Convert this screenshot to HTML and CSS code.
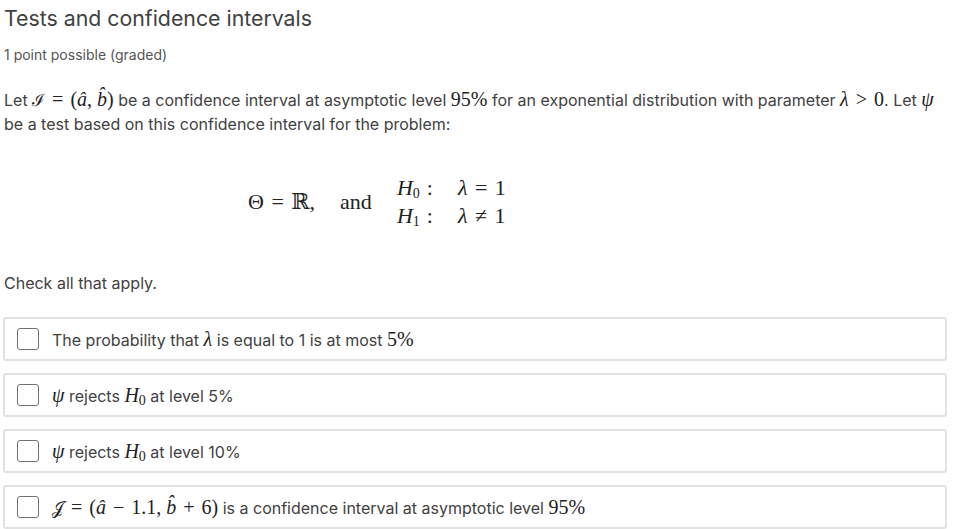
FILE: index.html
```html
<!DOCTYPE html>
<html>
<head>
<meta charset="utf-8">
<link rel="stylesheet" href="styles.css">
</head>
<body>
<div class="problem">
  <h2 class="title">Tests and confidence intervals</h2>
  <div class="meta">1 point possible (graded)</div>
  <p class="text intro"><span class="line">Let <span class="m"><span class="mi cal">ℐ</span> <span class="mo">=</span> <span class="mr">(</span><span class="mi">â</span><span class="mr">,</span> <span class="mi">b̂</span><span class="mr">)</span></span> be a confidence interval at asymptotic level <span class="m mr">95%</span> for an exponential distribution with parameter <span class="m"><span class="mi">λ</span> <span class="mo">&gt;</span> <span class="mr">0</span></span>. Let <span class="m mi">ψ</span></span><br>be a test based on this confidence interval for the problem:</p>
  <div class="display">
    <span class="m mr">Θ <span class="mo">=</span> ℝ,</span>
    <span class="m mr and">and</span>
    <span class="hyp m">
      <span class="mi">H<sub>0</sub></span><span class="mr">:</span><span><span class="mi">λ</span> <span class="mo">=</span> <span class="mr">1</span></span>
      <span class="mi">H<sub>1</sub></span><span class="mr">:</span><span><span class="mi">λ</span> <span class="mo">≠</span> <span class="mr">1</span></span>
    </span>
  </div>
  <p class="text check">Check all that apply.</p>
  <div class="choices">
    <label class="choice"><span class="box"></span><span>The probability that <span class="m mi">λ</span> is equal to 1 is at most <span class="m mr">5%</span></span></label>
    <label class="choice"><span class="box"></span><span><span class="m mi">ψ</span> rejects <span class="m mi">H<sub>0</sub></span> at level 5%</span></label>
    <label class="choice"><span class="box"></span><span><span class="m mi">ψ</span> rejects <span class="m mi">H<sub>0</sub></span> at level 10%</span></label>
    <label class="choice"><span class="box"></span><span><span class="m"><span class="mi cal">𝒥</span> <span class="mo">=</span> <span class="mr">(</span><span class="mi">â</span> <span class="mo">−</span> <span class="mr">1.1,</span> <span class="mi">b̂</span> <span class="mo">+</span> <span class="mr">6)</span></span> is a confidence interval at asymptotic level <span class="m mr">95%</span></span></label>
  </div>
</div>
</body>
</html>
```
FILE: styles.css
```css
html, body {
  margin: 0;
  padding: 0;
  background: #fff;
}
body {
  font-family: Inter, "Open Sans", sans-serif;
  color: #414141;
}
.problem {
  width: 944px;
  margin-left: 3px;
}
.title {
  margin: 0;
  padding: 5px 0 0 1px;
  font-size: 21.3px;
  font-weight: 400;
  line-height: 26px;
  color: #414141;
}
.meta {
  margin-top: 15px;
  padding-left: 1px;
  font-size: 14px;
  line-height: 18px;
  color: #555;
}
.text {
  margin: 0;
  padding-left: 1px;
  font-size: 16px;
  line-height: 24px;
}
.intro {
  margin-top: 24px;
}
.line {
  white-space: nowrap;
}
.m {
  font-family: "Liberation Serif", "DejaVu Serif", serif;
  font-size: 20px;
  line-height: 1;
  color: #222;
}
.mi {
  font-style: italic;
}
.mr, .mo {
  font-style: normal;
}
.mo {
  margin: 0 2px;
}
.cal {
  font-family: "DejaVu Serif", serif;
  font-style: normal;
  font-size: 17px;
}
sub {
  font-size: 14px;
  font-style: normal;
  vertical-align: -3px;
  line-height: 0;
}
.display {
  display: flex;
  align-items: center;
  gap: 25px;
  margin: 38px 0 0 245px;
  height: 56px;
}
.display .m {
  font-size: 22px;
}
.hyp {
  display: grid;
  grid-template-columns: auto auto auto;
  column-gap: 7px;
  row-gap: 0;
  line-height: 28px !important;
}
.hyp > span:nth-child(3n) {
  padding-left: 18px;
}
.check {
  margin-top: 41px;
}
.choices {
  display: flex;
  flex-direction: column;
  gap: 12px;
  margin-top: 22px;
}
.choice {
  display: flex;
  align-items: center;
  gap: 13px;
  height: 40px;
  padding: 0 12px;
  border: 2px solid #e2e2e2;
  border-radius: 3px;
  font-size: 16px;
  color: #414141;
}
.box {
  flex: none;
  width: 20px;
  height: 20px;
  border: 1px solid #707070;
  border-radius: 3px;
  background: #fff;
}
```
